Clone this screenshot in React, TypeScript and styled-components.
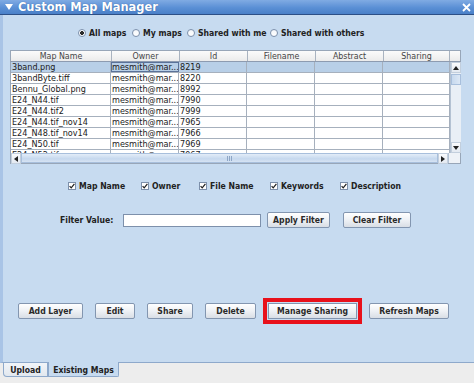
import React from "react";
import styled, { createGlobalStyle } from "styled-components";

const ui = `"DejaVu Sans Condensed", "DejaVu Sans", "Liberation Sans", sans-serif`;

const GlobalStyle = createGlobalStyle`
  html, body {
    margin: 0;
    padding: 0;
  }
  body {
    background: #ededed;
    font-family: ${ui};
  }
`;

const Window = styled.div`
  width: 474px;
  height: 383px;
  display: flex;
  flex-direction: column;
  overflow: hidden;
  background: #ededed;
`;

const TitleBar = styled.div`
  height: 14px;
  flex: none;
  display: flex;
  align-items: center;
  gap: 5px;
  padding: 0 3px 0 5px;
  background: linear-gradient(#80abe3, #5a8fd5 55%, #4a80c8);
  border-bottom: 1px solid #2c4f86;
  color: #fff;
`;

const TitleText = styled.span`
  flex: 1;
  font: bold 11.4px "DejaVu Sans", sans-serif;
  line-height: 14px;
  text-shadow: 0 0 1px #2b5693;
`;

const Panel = styled.div`
  height: 348px;
  flex: none;
  box-sizing: border-box;
  display: flex;
  flex-direction: column;
  background: #c7dbf0;
  border-left: 3px solid #a9c4e6;
  border-bottom: 1px solid #8ea9cb;
`;

const Label = styled.span`
  font: bold 8.6px ${ui};
  color: #222;
  white-space: nowrap;
`;

const RadioRow = styled.div`
  margin-top: 12px;
  height: 12px;
  padding-left: 75px;
  display: grid;
  grid-template-columns: 54px 55px 83px auto;
  align-items: center;
`;

const Option = styled.label`
  display: flex;
  align-items: center;
  gap: 3px;
`;

const RadioDot = styled.span<{ $on?: boolean }>`
  width: 8px;
  height: 8px;
  box-sizing: border-box;
  border-radius: 50%;
  border: 1px solid #7d90ab;
  background: ${(p) =>
    p.$on
      ? "radial-gradient(circle, #2a2a2a 0 1.6px, #fff 2.2px)"
      : "linear-gradient(#f4f7fb, #ffffff)"};
`;

const CheckBox = styled.span`
  width: 8px;
  height: 8px;
  box-sizing: border-box;
  border: 1px solid #7d90ab;
  background: #fff;
  display: flex;
  align-items: center;
  justify-content: center;
`;

const TableFrame = styled.div`
  margin: 11px 0 0 7px;
  width: 451px;
  display: flex;
  flex-direction: column;
  background: #fff;
`;

const HeaderRow = styled.div`
  height: 12px;
  display: flex;
  box-sizing: border-box;
  border: 1px solid #98a6b8;
  border-bottom-color: #8d9bb0;
  background: linear-gradient(#fbfbfb, #ebebeb);
`;

const HeadCell = styled.div<{ $w: number }>`
  width: ${(p) => p.$w}px;
  flex: none;
  box-sizing: border-box;
  border-right: 1px solid #a9b3c0;
  font: 8.8px ${ui};
  color: #444;
  text-align: center;
  line-height: 10px;
  &:last-child {
    border-right: none;
  }
`;

const BodyArea = styled.div`
  height: 91px;
  display: flex;
  border-left: 1px solid #98a6b8;
`;

const Grid = styled.div`
  width: 439px;
  overflow: hidden;
`;

const Row = styled.div<{ $sel?: boolean }>`
  height: 11px;
  display: flex;
  box-sizing: border-box;
  border-bottom: 1px solid #a6b0bd;
  background: ${(p) => (p.$sel ? "#b8cfe7" : "#fff")};
`;

const Cell = styled.div<{ $w: number; $focus?: boolean }>`
  width: ${(p) => p.$w}px;
  flex: none;
  box-sizing: border-box;
  border-right: 1px solid #a6b0bd;
  ${(p) => (p.$focus ? "outline: 1px solid #5a7299; outline-offset: -1px;" : "")}
  padding-left: 1px;
  font: 9px ${ui};
  color: #1a1a1a;
  line-height: 10px;
  white-space: nowrap;
  overflow: hidden;
`;

const VScroll = styled.div`
  width: 11px;
  display: flex;
  flex-direction: column;
  background: #e9eff6;
  border-left: 1px solid #b4c2d3;
  box-sizing: border-box;
`;

const ArrowBtn = styled.div`
  width: 10px;
  height: 11px;
  flex: none;
  display: flex;
  align-items: center;
  justify-content: center;
  background: linear-gradient(#fafbfd, #e3e9f1);
  box-sizing: border-box;
  border: 1px solid #c3cfdd;
`;

const VThumb = styled.div`
  height: 11px;
  margin-top: 1px;
  flex: none;
  background: linear-gradient(90deg, #c7d9ee, #dbe7f5);
  border: 1px solid #a8bfdc;
  box-sizing: border-box;
`;

const Track = styled.div`
  flex: 1;
`;

const HScroll = styled.div`
  height: 11px;
  display: flex;
  border: 1px solid #98a6b8;
  border-top: none;
  box-sizing: border-box;
  background: #e9eff6;
`;

const HThumb = styled.div`
  flex: 1;
  display: flex;
  align-items: center;
  justify-content: center;
  gap: 1px;
  background: linear-gradient(#e3edf8, #c6d8ee 60%, #d6e3f3);
  border: 1px solid #a8bfdc;
  box-sizing: border-box;
`;

const Grip = styled.span`
  width: 1px;
  height: 5px;
  background: #8ea6c6;
`;

const Corner = styled.div`
  width: 11px;
  flex: none;
  background: #eef2f7;
  border-left: 1px solid #b4c2d3;
`;

const CheckRow = styled.div`
  margin-top: 16px;
  height: 12px;
  padding-left: 65px;
  display: grid;
  grid-template-columns: 73px 58px 71px 70px auto;
  align-items: center;
`;

const FilterRow = styled.div`
  margin-top: 20px;
  height: 16px;
  padding-left: 57px;
  display: flex;
  align-items: center;
`;

const FilterLabel = styled(Label)`
  width: 63px;
`;

const TextInput = styled.div`
  width: 138px;
  height: 13px;
  margin-right: 6px;
  box-sizing: border-box;
  background: #fff;
  border: 1px solid #7d90ab;
`;

const Button = styled.button<{ $w: number; $gap?: number; $mark?: boolean }>`
  width: ${(p) => p.$w}px;
  height: 16px;
  padding: 0;
  flex: none;
  box-sizing: border-box;
  margin-left: ${(p) => p.$gap ?? 0}px;
  border: 1px solid #8396b0;
  border-radius: ${(p) => (p.$mark ? 0 : 2)}px;
  background: linear-gradient(#ffffff, #eef1f5 50%, #d9dee5);
  font: bold 8.6px ${ui};
  color: #2a2a2a;
  ${(p) => (p.$mark ? "outline: 4px solid #e8111b; outline-offset: 1px;" : "")}
`;

const ButtonRow = styled.div`
  margin-top: 75px;
  height: 16px;
  padding-left: 15px;
  display: flex;
  align-items: center;
  gap: 12px;
`;

const Tabs = styled.div`
  height: 15px;
  flex: none;
  padding-left: 3px;
  display: flex;
`;

const Tab = styled.div<{ $w: number; $active?: boolean }>`
  width: ${(p) => p.$w}px;
  height: ${(p) => (p.$active ? 15 : 14)}px;
  box-sizing: border-box;
  display: flex;
  align-items: center;
  justify-content: center;
  border: 1px solid #8ea9cb;
  border-top: none;
  border-radius: ${(p) => (p.$active ? "0 0 2px 0" : "0 0 0 4px")};
  background: ${(p) => (p.$active ? "#c7dbf0" : "linear-gradient(#f2f5f9, #e2e8ef)")};
  ${(p) => (p.$active ? "margin-top: -1px; padding-top: 1px;" : "")}
`;

const cols = [
  { name: "Map Name", w: 101 },
  { name: "Owner", w: 68 },
  { name: "Id", w: 68 },
  { name: "Filename", w: 68 },
  { name: "Abstract", w: 68 },
  { name: "Sharing", w: 66 },
];

const maps = [
  ["3band.png", "8219"],
  ["3bandByte.tiff", "8220"],
  ["Bennu_Global.png", "8992"],
  ["E24_N44.tif", "7990"],
  ["E24_N44.tif2", "7999"],
  ["E24_N44.tif_nov14", "7965"],
  ["E24_N48.tif_nov14", "7966"],
  ["E24_N50.tif", "7969"],
  ["E24_N52.tif", "7967"],
];

const Tri = ({ dir }: { dir: "up" | "down" | "left" | "right" }) => {
  const pts = {
    up: "0,4 3,0 6,4",
    down: "0,0 6,0 3,4",
    left: "4,0 4,6 0,3",
    right: "0,0 0,6 4,3",
  }[dir];
  const horiz = dir === "left" || dir === "right";
  return (
    <svg width={horiz ? 4 : 6} height={horiz ? 6 : 4} viewBox={horiz ? "0 0 4 6" : "0 0 6 4"}>
      <polygon points={pts} fill="#222" />
    </svg>
  );
};

const Check = () => (
  <svg width="6" height="6" viewBox="0 0 6 6">
    <path d="M0.6 3.2 L2.2 4.9 L5.4 0.8" fill="none" stroke="#1e1e1e" strokeWidth="1.2" />
  </svg>
);

export default function App() {
  return (
    <Window>
      <GlobalStyle />
      <TitleBar>
        <svg width="8" height="6" viewBox="0 0 8 6">
          <polygon points="0,0 8,0 4,6" fill="#fff" />
        </svg>
        <TitleText>Custom Map Manager</TitleText>
        <svg width="9" height="9" viewBox="0 0 9 9">
          <path d="M1 1 L8 8 M8 1 L1 8" stroke="#fff" strokeWidth="1.8" />
        </svg>
      </TitleBar>

      <Panel>
        <RadioRow>
          {["All maps", "My maps", "Shared with me", "Shared with others"].map((t, i) => (
            <Option key={t}>
              <RadioDot $on={i === 0} />
              <Label>{t}</Label>
            </Option>
          ))}
        </RadioRow>

        <TableFrame>
          <HeaderRow>
            {cols.map((c) => (
              <HeadCell key={c.name} $w={c.w}>
                {c.name}
              </HeadCell>
            ))}
            <HeadCell $w={11} />
          </HeaderRow>
          <BodyArea>
            <Grid>
              {maps.map(([name, id], i) => (
                <Row key={name} $sel={i === 0}>
                  <Cell $w={100}>{name}</Cell>
                  <Cell $w={68} $focus={i === 0}>
                    mesmith@mar...
                  </Cell>
                  <Cell $w={68}>{id}</Cell>
                  <Cell $w={68} />
                  <Cell $w={68} />
                  <Cell $w={67} />
                </Row>
              ))}
            </Grid>
            <VScroll>
              <ArrowBtn>
                <Tri dir="up" />
              </ArrowBtn>
              <VThumb />
              <Track />
              <ArrowBtn>
                <Tri dir="down" />
              </ArrowBtn>
            </VScroll>
          </BodyArea>
          <HScroll>
            <ArrowBtn>
              <Tri dir="left" />
            </ArrowBtn>
            <HThumb>
              <Grip />
              <Grip />
              <Grip />
            </HThumb>
            <ArrowBtn>
              <Tri dir="right" />
            </ArrowBtn>
            <Corner />
          </HScroll>
        </TableFrame>

        <CheckRow>
          {["Map Name", "Owner", "File Name", "Keywords", "Description"].map((t) => (
            <Option key={t}>
              <CheckBox>
                <Check />
              </CheckBox>
              <Label>{t}</Label>
            </Option>
          ))}
        </CheckRow>

        <FilterRow>
          <FilterLabel>Filter Value:</FilterLabel>
          <TextInput />
          <Button $w={63}>Apply Filter</Button>
          <Button $w={68} $gap={13}>
            Clear Filter
          </Button>
        </FilterRow>

        <ButtonRow>
          <Button $w={65}>Add Layer</Button>
          <Button $w={40}>Edit</Button>
          <Button $w={46}>Share</Button>
          <Button $w={51}>Delete</Button>
          <Button $w={89} $mark>
            Manage Sharing
          </Button>
          <Button $w={80}>Refresh Maps</Button>
        </ButtonRow>
      </Panel>

      <Tabs>
        <Tab $w={45}>
          <Label>Upload</Label>
        </Tab>
        <Tab $w={71} $active>
          <Label>Existing Maps</Label>
        </Tab>
      </Tabs>
    </Window>
  );
}
